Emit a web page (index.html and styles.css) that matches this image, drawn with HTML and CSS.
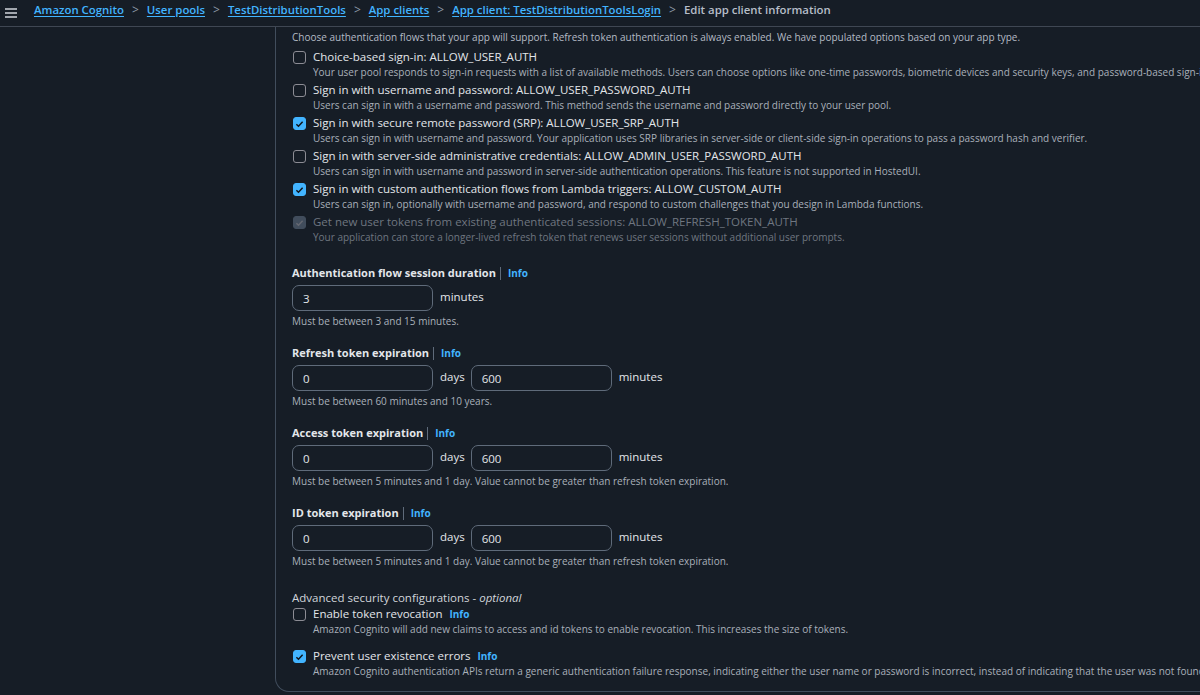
FILE: index.html
```html
<!DOCTYPE html>
<html lang="en">
<head>
<meta charset="utf-8">
<title>Edit app client information</title>
<link rel="stylesheet" href="styles.css">
</head>
<body>
<header class="topbar">
  <button class="menu-btn" aria-label="Open navigation">
    <svg width="12" height="10" viewBox="0 0 12 10"><path d="M0 1h12M0 5h12M0 9h12" stroke="#d1d5db" stroke-width="1.6"/></svg>
  </button>
  <nav class="crumbs">
    <a href="#">Amazon Cognito</a><span class="sep">&gt;</span>
    <a href="#">User pools</a><span class="sep">&gt;</span>
    <a href="#">TestDistributionTools</a><span class="sep">&gt;</span>
    <a href="#">App clients</a><span class="sep">&gt;</span>
    <a href="#">App client: TestDistributionToolsLogin</a><span class="sep">&gt;</span>
    <span class="current">Edit app client information</span>
  </nav>
</header>

<div class="layout">
  <aside class="side"></aside>
  <section class="panel">
    <p class="intro">Choose authentication flows that your app will support. Refresh token authentication is always enabled. We have populated options based on your app type.</p>

    <div class="checks">
      <label class="check">
        <span class="box"></span>
        <span class="check-text"><span class="check-label">Choice-based sign-in: ALLOW_USER_AUTH</span>
        <span class="hint">Your user pool responds to sign-in requests with a list of available methods. Users can choose options like one-time passwords, biometric devices and security keys, and password-based sign-in with or without a password.</span></span>
      </label>
      <label class="check">
        <span class="box"></span>
        <span class="check-text"><span class="check-label">Sign in with username and password: ALLOW_USER_PASSWORD_AUTH</span>
        <span class="hint">Users can sign in with a username and password. This method sends the username and password directly to your user pool.</span></span>
      </label>
      <label class="check">
        <span class="box on"><svg viewBox="0 0 12 12"><path d="M2.6 6.2l2.3 2.3 4.5-5" fill="none" stroke="#0f141a" stroke-width="1.6"/></svg></span>
        <span class="check-text"><span class="check-label">Sign in with secure remote password (SRP): ALLOW_USER_SRP_AUTH</span>
        <span class="hint">Users can sign in with username and password. Your application uses SRP libraries in server-side or client-side sign-in operations to pass a password hash and verifier.</span></span>
      </label>
      <label class="check">
        <span class="box"></span>
        <span class="check-text"><span class="check-label">Sign in with server-side administrative credentials: ALLOW_ADMIN_USER_PASSWORD_AUTH</span>
        <span class="hint">Users can sign in with username and password in server-side authentication operations. This feature is not supported in HostedUI.</span></span>
      </label>
      <label class="check">
        <span class="box on"><svg viewBox="0 0 12 12"><path d="M2.6 6.2l2.3 2.3 4.5-5" fill="none" stroke="#0f141a" stroke-width="1.6"/></svg></span>
        <span class="check-text"><span class="check-label">Sign in with custom authentication flows from Lambda triggers: ALLOW_CUSTOM_AUTH</span>
        <span class="hint">Users can sign in, optionally with username and password, and respond to custom challenges that you design in Lambda functions.</span></span>
      </label>
      <label class="check disabled">
        <span class="box dis"><svg viewBox="0 0 12 12"><path d="M2.6 6.2l2.3 2.3 4.5-5" fill="none" stroke="#656871" stroke-width="1.6"/></svg></span>
        <span class="check-text"><span class="check-label">Get new user tokens from existing authenticated sessions: ALLOW_REFRESH_TOKEN_AUTH</span>
        <span class="hint">Your application can store a longer-lived refresh token that renews user sessions without additional user prompts.</span></span>
      </label>
    </div>

    <div class="field">
      <div class="field-label">Authentication flow session duration <span class="divider"></span><a class="info" href="#">Info</a></div>
      <div class="inputs">
        <span class="input">3</span><span class="unit">minutes</span>
      </div>
      <div class="constraint">Must be between 3 and 15 minutes.</div>
    </div>

    <div class="field">
      <div class="field-label">Refresh token expiration <span class="divider"></span><a class="info" href="#">Info</a></div>
      <div class="inputs">
        <span class="input">0</span><span class="unit">days</span>
        <span class="input">600</span><span class="unit">minutes</span>
      </div>
      <div class="constraint">Must be between 60 minutes and 10 years.</div>
    </div>

    <div class="field">
      <div class="field-label">Access token expiration <span class="divider"></span><a class="info" href="#">Info</a></div>
      <div class="inputs">
        <span class="input">0</span><span class="unit">days</span>
        <span class="input">600</span><span class="unit">minutes</span>
      </div>
      <div class="constraint">Must be between 5 minutes and 1 day. Value cannot be greater than refresh token expiration.</div>
    </div>

    <div class="field">
      <div class="field-label">ID token expiration <span class="divider"></span><a class="info" href="#">Info</a></div>
      <div class="inputs">
        <span class="input">0</span><span class="unit">days</span>
        <span class="input">600</span><span class="unit">minutes</span>
      </div>
      <div class="constraint">Must be between 5 minutes and 1 day. Value cannot be greater than refresh token expiration.</div>
    </div>

    <div class="advanced">
      <div class="adv-title">Advanced security configurations - <em>optional</em></div>
      <label class="check">
        <span class="box"></span>
        <span class="check-text"><span class="check-label">Enable token revocation <a class="info" href="#">Info</a></span>
        <span class="hint">Amazon Cognito will add new claims to access and id tokens to enable revocation. This increases the size of tokens.</span></span>
      </label>
      <label class="check gap">
        <span class="box on"><svg viewBox="0 0 12 12"><path d="M2.6 6.2l2.3 2.3 4.5-5" fill="none" stroke="#0f141a" stroke-width="1.6"/></svg></span>
        <span class="check-text"><span class="check-label">Prevent user existence errors <a class="info" href="#">Info</a></span>
        <span class="hint">Amazon Cognito authentication APIs return a generic authentication failure response, indicating either the user name or password is incorrect, instead of indicating that the user was not found.</span></span>
      </label>
    </div>
  </section>
</div>
</body>
</html>
```

FILE: styles.css
```css
* { box-sizing: border-box; }

html, body {
  margin: 0;
  height: 100%;
  overflow: hidden;
}

body {
  background: #161d26;
  color: #d1d5db;
  font-family: "Open Sans", "Noto Sans", sans-serif;
  font-size: 11px;
}

a { color: #42b4ff; }

/* Breadcrumb bar */
.topbar {
  height: 27px;
  display: flex;
  align-items: center;
  border-bottom: 1px solid #3f4753;
  padding-left: 5px;
}

.menu-btn {
  background: none;
  border: 0;
  padding: 0;
  width: 13px;
  height: 18px;
  display: flex;
  align-items: center;
  margin-right: 16px;
}

.crumbs {
  display: flex;
  align-items: center;
  font-size: 11.4px;
  font-weight: 600;
  white-space: nowrap;
  margin-top: -8px;
}

.crumbs a {
  color: #42b4ff;
  text-decoration: underline;
  text-underline-offset: 2px;
}

.crumbs .sep {
  color: #8d99a8;
  font-weight: 400;
  font-size: 12px;
  margin: 0 8px;
}

.crumbs .current {
  color: #b6bec9;
}

/* Page body */
.layout {
  display: flex;
  height: calc(100% - 27px);
}

.side {
  width: 275px;
  flex: none;
}

.panel {
  flex: 1;
  border-left: 1px solid #414d5c;
  border-bottom: 1px solid #414d5c;
  border-bottom-left-radius: 14px;
  margin-bottom: 3px;
  padding: 3px 0 0 16px;
  white-space: nowrap;
  overflow: hidden;
}

.intro {
  margin: 0 0 4px;
  color: #b4bbc5;
  font-size: 10px;
  line-height: 15px;
}

/* Checkbox rows */
.checks {
  display: flex;
  flex-direction: column;
  gap: 2px;
}

.check {
  display: flex;
  align-items: flex-start;
  gap: 7px;
}

.box {
  width: 13px;
  height: 13px;
  flex: none;
  margin: 2px 0 0 1px;
  border: 1.5px solid #8c8c94;
  border-radius: 3px;
  display: flex;
  align-items: center;
  justify-content: center;
}

.box svg { width: 12px; height: 12px; }

.box.on {
  background: #42b4ff;
  border-color: #42b4ff;
}

.box.dis {
  background: #414d5c;
  border-color: #414d5c;
}

.check-text {
  display: flex;
  flex-direction: column;
}

.check-label {
  font-size: 11.5px;
  line-height: 16px;
  color: #e3e6ea;
}

.hint {
  font-size: 10px;
  line-height: 15px;
  color: #a9b0ba;
}

.disabled .check-label,
.disabled .hint {
  color: #6f7680;
}

/* Duration fields */
.field {
  margin-top: 20px;
}

.field + .field { margin-top: 16px; }

.field-label {
  font-size: 11px;
  font-weight: 700;
  line-height: 16px;
  display: flex;
  align-items: center;
  color: #e3e6ea;
}

.divider {
  width: 1px;
  height: 13px;
  background: #5f6b7a;
  margin: 0 7px 0 4px;
}

.info {
  font-size: 10px;
  font-weight: 700;
  text-decoration: none;
  color: #42b4ff;
}

.inputs {
  display: flex;
  align-items: center;
  margin-top: 4px;
}

.input {
  width: 141px;
  height: 26px;
  border: 1px solid #5f6b7a;
  border-radius: 7px;
  padding: 0 10px;
  display: flex;
  align-items: center;
  font-size: 11.5px;
  color: #e3e6ea;
}

.unit {
  font-size: 11.5px;
  line-height: 16px;
  margin: 0 6px 2px 7px;
  color: #e3e6ea;
}

.constraint {
  margin-top: 3px;
  font-size: 10px;
  line-height: 15px;
  color: #a9b0ba;
}

/* Advanced section */
.advanced {
  margin-top: 21px;
}

.adv-title {
  font-size: 11.5px;
  line-height: 16px;
  color: #d1d5db;
}

.check-label .info {
  margin-left: 4px;
}

.check.gap { margin-top: 11px; }
```
